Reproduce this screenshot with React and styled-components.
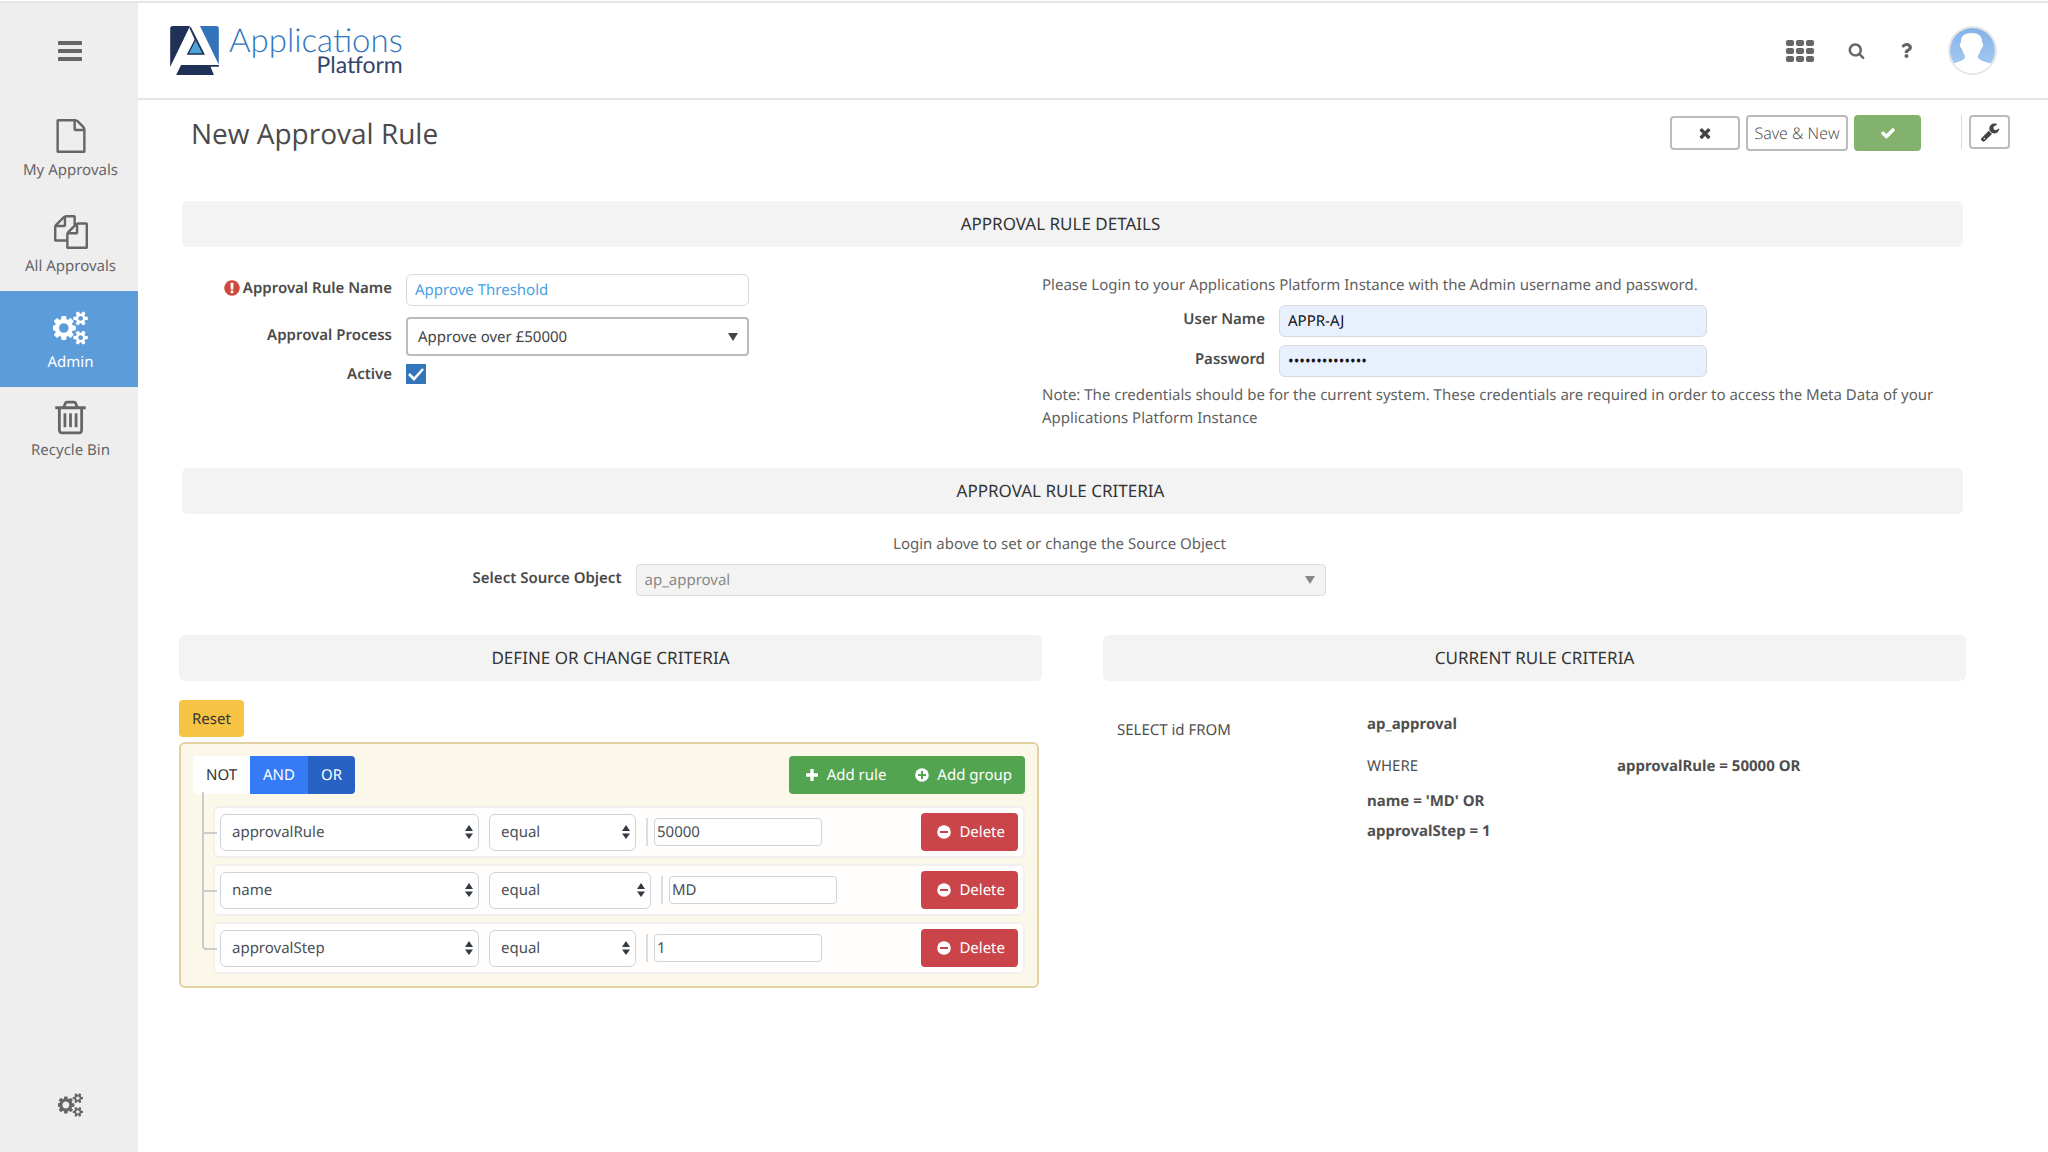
import React, { useState } from 'react';
import styled, { createGlobalStyle, css } from 'styled-components';
import { FaQuestion } from 'react-icons/fa';

const GlobalStyle = createGlobalStyle`
  *, *::before, *::after {
    box-sizing: border-box;
  }

  body {
    margin: 1px 0 0;
    background: #fff;
    color: #555;
    font-family: 'Noto Sans', 'Open Sans', sans-serif;
    font-size: 15px;
    line-height: 24px;
    text-rendering: geometricPrecision;
  }

  button, input, select {
    font: inherit;
    color: inherit;
    margin: 0;
    text-rendering: inherit;
  }

  button {
    cursor: pointer;
  }
`;

const ICONS = {
  bars: 'M1664 1344v128q0 26-19 45t-45 19h-1408q-26 0-45-19t-19-45v-128q0-26 19-45t45-19h1408q26 0 45 19t19 45zm0-512v128q0 26-19 45t-45 19h-1408q-26 0-45-19t-19-45v-128q0-26 19-45t45-19h1408q26 0 45 19t19 45zm0-512v128q0 26-19 45t-45 19h-1408q-26 0-45-19t-19-45v-128q0-26 19-45t45-19h1408q26 0 45 19t19 45z',
  file: 'M1596 380q28 28 48 76t20 88v1152q0 40-28 68t-68 28h-1344q-40 0-68-28t-28-68v-1600q0-40 28-68t68-28h896q40 0 88 20t76 48zm-444-244v376h376q-10-29-22-41l-313-313q-12-12-41-22zm384 1528v-1024h-416q-40 0-68-28t-28-68v-416h-768v1536h1280z',
  files: 'M1696 384q40 0 68 28t28 68v1216q0 40-28 68t-68 28h-960q-40 0-68-28t-28-68v-288h-544q-40 0-68-28t-28-68v-672q0-40 20-88t48-76l408-408q28-28 76-48t88-20h416q40 0 68 28t28 68v328q68-40 128-40h416zm-544 213l-299 299h299v-299zm-640-384l-299 299h299v-299zm196 647l316-316v-416h-384v416q0 40-28 68t-68 28h-416v640h512v-256q0-40 20-88t48-76zm956 804v-1152h-384v416q0 40-28 68t-68 28h-416v640h896z',
  cogs: 'M832 896q0-106-75-181t-181-75-181 75-75 181 75 181 181 75 181-75 75-181zm768 512q0-52-38-90t-90-38-90 38-38 90q0 53 37.5 90.5t90.5 37.5 90.5-37.5 37.5-90.5zm0-1024q0-52-38-90t-90-38-90 38-38 90q0 53 37.5 90.5t90.5 37.5 90.5-37.5 37.5-90.5zm-384 421v185q0 10-7 19.5t-16 10.5l-155 24q-11 35-32 76 34 48 90 115 7 11 7 20 0 12-7 19-23 30-82.5 89.5t-78.5 59.5q-11 0-21-7l-115-90q-37 19-77 31-11 108-23 155-7 24-30 24h-186q-11 0-20-7.5t-10-17.5l-23-153q-34-10-75-31l-118 89q-7 7-20 7-11 0-21-8-144-133-144-160 0-9 7-19 10-14 41-53t47-61q-23-44-35-82l-152-24q-10-1-17-9.5t-7-19.5v-185q0-10 7-19.5t16-10.5l155-24q11-35 32-76-34-48-90-115-7-11-7-20 0-12 7-20 22-30 82-89t79-59q11 0 21 7l115 90q34-18 77-32 11-108 23-154 7-24 30-24h186q11 0 20 7.5t10 17.5l23 153q34 10 75 31l118-89q8-7 20-7 11 0 21 8 144 133 144 160 0 8-7 19-12 16-42 54t-45 60q23 48 34 82l152 23q10 2 17 10.5t7 19.5zm640 533v140q0 16-149 31-12 27-30 52 51 113 51 138 0 4-4 7-122 71-124 71-8 0-46-47t-52-68q-20 2-30 2t-30-2q-14 21-52 68t-46 47q-2 0-124-71-4-3-4-7 0-25 51-138-18-25-30-52-149-15-149-31v-140q0-16 149-31 13-29 30-52-51-113-51-138 0-4 4-7 4-2 35-20t59-34 30-16q8 0 46 46.5t52 67.5q20-2 30-2t30 2q51-71 92-112l6-2q4 0 124 70 4 3 4 7 0 25-51 138 17 23 30 52 149 15 149 31zm0-1024v140q0 16-149 31-12 27-30 52 51 113 51 138 0 4-4 7-122 71-124 71-8 0-46-47t-52-68q-20 2-30 2t-30-2q-14 21-52 68t-46 47q-2 0-124-71-4-3-4-7 0-25 51-138-18-25-30-52-149-15-149-31v-140q0-16 149-31 13-29 30-52-51-113-51-138 0-4 4-7 4-2 35-20t59-34 30-16q8 0 46 46.5t52 67.5q20-2 30-2t30 2q51-71 92-112l6-2q4 0 124 70 4 3 4 7 0 25-51 138 17 23 30 52 149 15 149 31z',
  trash: 'M704 736v576q0 14-9 23t-23 9h-64q-14 0-23-9t-9-23v-576q0-14 9-23t23-9h64q14 0 23 9t9 23zm256 0v576q0 14-9 23t-23 9h-64q-14 0-23-9t-9-23v-576q0-14 9-23t23-9h64q14 0 23 9t9 23zm256 0v576q0 14-9 23t-23 9h-64q-14 0-23-9t-9-23v-576q0-14 9-23t23-9h64q14 0 23 9t9 23zm128 724v-948h-896v948q0 22 7 40.5t14.5 27 10.5 8.5h832q3 0 10.5-8.5t14.5-27 7-40.5zm-672-1076h448l-48-117q-7-9-17-11h-317q-10 2-17 11zm928 32v64q0 14-9 23t-23 9h-96v948q0 83-47 143.5t-113 60.5h-832q-66 0-113-58.5t-47-141.5v-952h-96q-14 0-23-9t-9-23v-64q0-14 9-23t23-9h309l70-167q15-37 54-63t79-26h320q40 0 79 26t54 63l70 167h309q14 0 23 9t9 23z',
  search: 'M1216 832q0-185-131.5-316.5t-316.5-131.5-316.5 131.5-131.5 316.5 131.5 316.5 316.5 131.5 316.5-131.5 131.5-316.5zm512 832q0 52-38 90t-90 38q-54 0-90-38l-343-342q-179 124-399 124-143 0-273.5-55.5t-225-150-150-225-55.5-273.5 55.5-273.5 150-225 225-150 273.5-55.5 273.5 55.5 225 150 150 225 55.5 273.5q0 220-124 399l343 343q37 37 37 90z',
  times: 'M1490 1322q0 40-28 68l-136 136q-28 28-68 28t-68-28l-294-294-294 294q-28 28-68 28t-68-28l-136-136q-28-28-28-68t28-68l294-294-294-294q-28-28-28-68t28-68l136-136q28-28 68-28t68 28l294 294 294-294q28-28 68-28t68 28l136 136q28 28 28 68t-28 68l-294 294 294 294q28 28 28 68z',
  check: 'M1671 566q0 40-28 68l-724 724-136 136q-28 28-68 28t-68-28l-136-136-362-362q-28-28-28-68t28-68l136-136q28-28 68-28t68 28l294 295 656-657q28-28 68-28t68 28l136 136q28 28 28 68z',
  wrench: 'M448 1472q0-26-19-45t-45-19-45 19-19 45 19 45 45 19 45-19 19-45zm644-420l-682 682q-37 37-90 37-52 0-91-37l-106-108q-38-36-38-90 0-53 38-91l681-681q39 98 114.5 173.5t173.5 114.5zm634-435q0 39-23 106-47 134-164.5 217.5t-258.5 83.5q-185 0-316.5-131.5t-131.5-316.5 131.5-316.5 316.5-131.5q58 0 121.5 16.5t107.5 46.5q16 11 16 28t-16 28l-293 169v224l193 107q5-3 79-48.5t135.5-81 70.5-35.5q15 0 23.5 10t8.5 25z',
  alert: 'M896 128q209 0 385.5 103t279.5 279.5 103 385.5-103 385.5-279.5 279.5-385.5 103-385.5-103-279.5-279.5-103-385.5 103-385.5 279.5-279.5 385.5-103zm128 1247v-190q0-14-9-23.5t-22-9.5h-192q-13 0-23 10t-10 23v190q0 13 10 23t23 10h192q13 0 22-9.5t9-23.5zm-2-344l18-621q0-12-10-18-10-8-24-8h-220q-14 0-24 8-10 6-10 18l17 621q0 10 10 17.5t24 7.5h185q14 0 23.5-7.5t10.5-17.5z',
};

const Icon = ({ name, size = 16 }) => (
  <svg
    width={name === 'cogs' ? Math.round(size * 1.07) : size}
    height={size}
    viewBox={name === 'cogs' ? '0 0 1920 1792' : '0 0 1792 1792'}
    fill="currentColor"
    aria-hidden="true"
  >
    <path d={ICONS[name]} />
  </svg>
);

const GridIcon = () => (
  <svg width="28" height="22" viewBox="0 0 28 22" fill="currentColor" aria-hidden="true">
    {[0, 8, 16].map(y => [0, 10, 20].map(x => (
      <rect key={`${x}-${y}`} x={x} y={y} width="8" height="6" rx="2" />
    )))}
  </svg>
);

const PlusIcon = () => (
  <svg width="14" height="14" viewBox="0 0 14 14" fill="none" stroke="currentColor" strokeWidth="3.4" aria-hidden="true">
    <path d="M7 1v12M1 7h12" />
  </svg>
);

const CircleIcon = ({ sign, color }) => (
  <svg width="14" height="14" viewBox="0 0 14 14" aria-hidden="true">
    <circle cx="7" cy="7" r="6.8" fill="#fff" />
    <path d={sign === 'plus' ? 'M7 3v8M3 7h8' : 'M3 7h8'} stroke={color} strokeWidth="2" />
  </svg>
);

const DownArrow = () => (
  <svg width="10" height="8" viewBox="0 0 10 8" fill="currentColor" aria-hidden="true">
    <path d="M0 0h10L5 8z" />
  </svg>
);

const UpDownArrows = () => (
  <svg width="8" height="14" viewBox="0 0 8 14" fill="#343a40" aria-hidden="true">
    <path d="M4 0l4 6H0zM4 14L0 8.400h8z" />
  </svg>
);

const LogoMark = () => (
  <svg width="49" height="49" viewBox="0 0 147 148" aria-hidden="true">
    <path d="M8 0h52L0 124V8q0-8 8-8z" fill="#1f3156" />
    <path d="M90 0h49q8 0 8 8v109z" fill="#3273b9" />
    <path d="M58 6l4-4 43 85H50l24-46z" fill="#1f3156" />
    <path d="M77 44l20 38H57z" fill="#4ba3d8" />
    <path d="M33 118h114v5h-25l10 25H18z" fill="#1f3156" />
  </svg>
);

const Avatar = () => (
  <svg width="49" height="49" viewBox="0 0 49 49" role="img" aria-label="Profile">
    <defs>
      <linearGradient id="avatarFill" x1="0" y1="0" x2="0" y2="1">
        <stop offset="0" stopColor="#82b1e7" />
        <stop offset="1" stopColor="#a3c8f0" />
      </linearGradient>
      <clipPath id="avatarClip">
        <circle cx="24.500" cy="24.500" r="22.500" />
      </clipPath>
    </defs>
    <circle cx="24.500" cy="24.500" r="23.500" fill="#fff" stroke="#e6e6e6" strokeWidth="2" />
    <g clipPath="url(#avatarClip)">
      <rect width="49" height="38" fill="url(#avatarFill)" />
      <path
        d="M23.500 7c7 0 11 3 10.500 9.500 1 .3 1.200 1.500 1 3-.3 1.600-.8 3-2 3.200-.6 3-1.500 5-3 6.800v2c1 2.500 6 4.500 15 6.500v12H3V38c8-2 13-4 14-6.500v-2c-1.500-1.800-2.500-3.800-3-6.800-1.300-.2-1.900-1.600-2-3.200-.1-1.500 0-2.700 1-3C12.500 10 16.500 7 23.500 7z"
        fill="#fff"
      />
    </g>
  </svg>
);

const Page = styled.div`
  display: flex;
  min-height: calc(100vh - 1px);
  border-top: 2px solid #e3e6e8;
`;

const Sidebar = styled.aside`
  display: flex;
  flex-direction: column;
  flex: none;
  width: 138px;
  background: #eee;
  color: #666;
`;

const IconButton = styled.button`
  display: flex;
  align-items: center;
  justify-content: center;
  padding: 0;
  border: 0;
  background: none;
  color: #666;
`;

const MenuButton = styled(IconButton)`
  height: 96px;
  padding-left: 1px;
`;

const SettingsButton = styled(IconButton)`
  height: 24px;
  margin: auto 0 35px;
  padding-left: 3px;
`;

const NavItem = styled.a`
  display: flex;
  flex-direction: column;
  align-items: center;
  height: 96px;
  padding-top: ${({ $compact }) => ($compact ? '11px' : '20px')};
  padding-left: 3px;
  gap: ${({ $compact }) => ($compact ? '1px' : '5px')};
  color: inherit;
  text-decoration: none;

  ${({ $active }) => $active && css`
    background: #5d9cdb;
    color: #fff;
  `}
`;

const Main = styled.div`
  flex: 1;
  min-width: 0;
`;

const Header = styled.header`
  display: flex;
  align-items: center;
  justify-content: space-between;
  height: 97px;
  padding: 0 50px 0 32px;
  border-bottom: 2px solid #e3e6e8;
`;

const Logo = styled.a`
  display: flex;
  align-items: center;
  gap: 10px;
  text-decoration: none;
`;

const LogoText = styled.span`
  display: flex;
  flex-direction: column;
  align-items: flex-end;
  font-family: Lato, 'Open Sans', sans-serif;
`;

const LogoName = styled.span`
  color: #3276bd;
  font-size: 33px;
  font-weight: 300;
  line-height: 26px;
`;

const LogoSub = styled.span`
  color: #33456b;
  font-size: 23px;
  line-height: 22px;
`;

const HeaderTools = styled.div`
  display: flex;
  align-items: center;
  gap: 34px;
`;

const AvatarButton = styled(IconButton)`
  margin-right: 1px;
`;

const TitleBar = styled.div`
  display: flex;
  align-items: flex-start;
  justify-content: space-between;
  padding: 15px 38px 0 53px;
`;

const Title = styled.h1`
  margin: 0;
  color: #4a4a4a;
  font-family: 'Open Sans', 'Noto Sans', sans-serif;
  font-size: 28px;
  font-weight: 400;
  line-height: 38px;
`;

const Actions = styled.div`
  display: flex;
  align-items: center;
  gap: 6px;
`;

const ActionButton = styled.button`
  display: flex;
  align-items: center;
  justify-content: center;
  width: ${({ $width }) => $width}px;
  height: ${({ $small }) => ($small ? '34px' : '36px')};
  padding: 0;
  border: 2px solid #bbb;
  border-radius: 4px;
  background: #fff;
  color: #444;
  font-family: 'Open Sans', 'Noto Sans', sans-serif;
  font-size: 16px;
  font-weight: 300;
  white-space: nowrap;

  ${({ $primary }) => $primary && css`
    border-color: #83b26f;
    background: #83b26f;
    color: #fff;
  `}
`;

const ToolsGroup = styled.div`
  align-self: flex-start;
  margin-left: 34px;
  padding-left: 7px;
  border-left: 1px solid #ddd;
`;

const Content = styled.main`
  padding: 48px 82px 40px 41px;
`;

const SectionTitle = styled.h2`
  margin: 0 ${({ $inset }) => ($inset ? '3px' : '0')};
  padding: 11px ${({ $inset }) => ($inset ? '24px' : '0')} 11px 0;
  border-radius: 6px;
  background: #f3f3f3;
  color: #333;
  font-size: 17px;
  font-weight: 400;
  line-height: 24px;
  text-align: center;
`;

const Details = styled.div`
  display: grid;
  grid-template-columns: 570px 1fr;
  column-gap: 293px;
  min-height: 221px;
  padding-top: 27px;
`;

const Fields = styled.div`
  display: flex;
  flex-direction: column;
  gap: 8px;
`;

const LoginFields = styled(Fields)`
  padding: 8px 0 7px;
`;

const Field = styled.div`
  display: flex;
  gap: 14px;
`;

const NameField = styled(Field)`
  padding-bottom: 3px;
`;

const Label = styled.label`
  display: flex;
  align-items: center;
  justify-content: flex-end;
  flex: none;
  gap: 2px;
  width: ${({ $width }) => $width}px;
  height: ${({ $height = 28 }) => $height}px;
  color: #4a4a4a;
  font-weight: 600;
  white-space: nowrap;
`;

const Required = styled.span`
  display: flex;
  color: #d0493f;
`;

const TextInput = styled.input`
  width: ${({ $width }) => $width}px;
  height: 32px;
  padding: 0 8px;
  border: 1px solid #d8d8d8;
  border-radius: 6px;
  background: ${({ $filled }) => ($filled ? '#e8f0fe' : '#fff')};
  color: ${({ $filled }) => ($filled ? '#111' : '#4a9fe6')};
`;

const SelectBox = styled.span`
  position: relative;
  display: block;
  width: ${({ $width }) => $width}px;
  color: ${({ $muted }) => ($muted ? '#888' : '#444')};

  svg {
    position: absolute;
    top: 50%;
    right: 11px;
    transform: translateY(-50%);
    pointer-events: none;
  }
`;

const Select = styled.select`
  display: block;
  appearance: none;
  width: 100%;
  height: 39px;
  padding: 0 10px;
  border: 2px solid #bbb;
  border-radius: 4px;
  background: #fff;

  &:disabled {
    height: 32px;
    padding: 0 8px;
    border: 1px solid #ddd;
    background: #f3f3f3;
    opacity: 1;
  }
`;

const Checkbox = styled.input`
  appearance: none;
  width: 20px;
  height: 20px;
  background: #3276b9 url("data:image/svg+xml,%3Csvg xmlns='http://www.w3.org/2000/svg' viewBox='0 0 20 20' fill='none' stroke='white' stroke-width='2.6'%3E%3Cpath d='M3 10l5 5 9-10'/%3E%3C/svg%3E") center / 20px;

  &:not(:checked) {
    border: 2px solid #3276b9;
    background: #fff;
  }
`;

const Note = styled.p`
  margin: 0;
  color: #5f5f5f;
  line-height: 23px;
`;

const Login = styled.div`
  max-width: 922px;
`;

const SourceObject = styled.div`
  display: flex;
  flex-direction: column;
  align-items: center;
  gap: 8px;
  padding: 19px 26px 39px 0;
  text-align: center;
`;

const SourceField = styled(Field)`
  margin-right: 326px;
`;

const Columns = styled.div`
  display: grid;
  grid-template-columns: 1fr 1fr;
  column-gap: 61px;
`;

const ResetButton = styled.button`
  height: 37px;
  margin: 19px 0 5px;
  padding: 0 13px;
  border: 0;
  border-radius: 4px;
  background: #f6c344;
  color: #333;
`;

const Builder = styled.div`
  margin-right: 3px;
  padding: 12px;
  border: 2px solid #e3d1a2;
  border-radius: 6px;
  background: #fcf8e9;
`;

const BuilderHeader = styled.div`
  display: flex;
  justify-content: space-between;
`;

const ButtonGroup = styled.div`
  display: flex;
  border-radius: 4px;
  overflow: hidden;
`;

const GroupButton = styled.button`
  height: 38px;
  padding: 0 13px;
  border: 0;
  background: ${({ $color }) => $color};
  color: ${({ $dark }) => ($dark ? '#333' : '#fff')};
`;

const BuilderButton = styled.button`
  display: flex;
  align-items: center;
  gap: 8px;
  height: 38px;
  padding: 0 13px 0 16px;
  border: 0;
  border-radius: ${({ $rounded }) => ($rounded ? '4px' : '0')};
  background: ${({ $color }) => $color};
  color: #fff;
`;

const RuleList = styled.ul`
  display: flex;
  flex-direction: column;
  gap: 6px;
  margin: 12px 0 0;
  padding: 0 0 0 20px;
  list-style: none;
`;

const Rule = styled.li`
  position: relative;
  display: flex;
  align-items: center;
  height: 52px;
  padding: 0 5px;
  border: 2px solid #f1f0ee;
  border-radius: 6px;
  background: #fffefc;

  /* tree connector drawn in the gutter on the left */
  &::before {
    content: '';
    position: absolute;
    left: -13px;
    top: -34px;
    width: 15px;
    height: 60px;
    border: solid #ccc;
    border-width: 0 0 2px 2px;
  }

  &:first-child::before {
    top: -16px;
    height: 42px;
  }

  &:last-child::before {
    border-bottom-left-radius: 4px;
  }
`;

const RuleSelectBox = styled(SelectBox)`
  margin-right: 10px;
  color: #495057;

  svg {
    right: 6px;
  }
`;

const RuleSelect = styled(Select)`
  height: 37px;
  border: 1px solid #ced4da;
  border-radius: 6px;
  padding: 0 11px;
`;

const ValueWrap = styled.div`
  height: 28px;
  padding-left: 6px;
  border-left: 2px solid #ddd;
`;

const ValueInput = styled.input`
  display: block;
  width: 168px;
  height: 28px;
  padding: 0 2px;
  border: 1px solid #ced4da;
  border-radius: 4px;
  background: #fff;
  color: #495057;
`;

const DeleteSlot = styled.div`
  margin-left: auto;
`;

const Criteria = styled.dl`
  display: grid;
  grid-template-columns: 250px 250px 1fr;
  margin: 0;
  padding: 31px 0 0 14px;
  color: #4f4f4f;
`;

const Term = styled.dt`
  padding-top: ${({ $lowered }) => ($lowered ? '6px' : '0')};
  grid-column: ${({ $column }) => $column};
`;

const Clause = styled.dd`
  grid-column: ${({ $column }) => $column};
  height: ${({ $height }) => $height}px;
  margin: 0;
  font-weight: 700;
`;

const NAV_ITEMS = [
  { label: 'My Approvals', icon: 'file', size: 34 },
  { label: 'All Approvals', icon: 'files', size: 34 },
  { label: 'Admin', icon: 'cogs', size: 34, active: true },
  { label: 'Recycle Bin', icon: 'trash', size: 39, compact: true },
];

const INITIAL_RULES = [
  { id: 1, field: 'approvalRule', operator: 'equal', value: '50000' },
  { id: 2, field: 'name', operator: 'equal', value: 'MD', wide: true },
  { id: 3, field: 'approvalStep', operator: 'equal', value: '1' },
];

const RuleRow = ({ rule, onDelete }) => (
  <Rule>
    <RuleSelectBox $width={259}>
      <RuleSelect aria-label="Field" defaultValue={rule.field}>
        <option>approvalRule</option>
        <option>name</option>
        <option>approvalStep</option>
      </RuleSelect>
      <UpDownArrows />
    </RuleSelectBox>
    <RuleSelectBox $width={rule.wide ? 162 : 147}>
      <RuleSelect aria-label="Operator" defaultValue={rule.operator}>
        <option>equal</option>
        <option>not equal</option>
      </RuleSelect>
      <UpDownArrows />
    </RuleSelectBox>
    <ValueWrap>
      <ValueInput aria-label="Value" defaultValue={rule.value} />
    </ValueWrap>
    <DeleteSlot>
      <BuilderButton type="button" $rounded $color="#c94549" onClick={() => onDelete(rule.id)}>
        <CircleIcon sign="minus" color="#c94549" />
        Delete
      </BuilderButton>
    </DeleteSlot>
  </Rule>
);

const App = () => {
  const [rules, setRules] = useState(INITIAL_RULES);

  const addRule = () => {
    setRules([...rules, { id: Date.now(), field: 'name', operator: 'equal', value: '' }]);
  };

  const deleteRule = (id) => {
    setRules(rules.filter(rule => rule.id !== id));
  };

  return (
    <>
      <GlobalStyle />
      <Page>
        <Sidebar>
          <MenuButton type="button" aria-label="Menu">
            <Icon name="bars" size={28} />
          </MenuButton>
          <nav>
            {NAV_ITEMS.map(item => (
              <NavItem key={item.label} href="#" $active={item.active} $compact={item.compact}>
                <Icon name={item.icon} size={item.size} />
                {item.label}
              </NavItem>
            ))}
          </nav>
          <SettingsButton type="button" aria-label="Settings">
            <Icon name="cogs" size={24} />
          </SettingsButton>
        </Sidebar>

        <Main>
          <Header>
            <Logo href="#">
              <LogoMark />
              <LogoText>
                <LogoName>Applications</LogoName>
                <LogoSub>Platform</LogoSub>
              </LogoText>
            </Logo>
            <HeaderTools>
              <IconButton type="button" aria-label="Apps"><GridIcon /></IconButton>
              <IconButton type="button" aria-label="Search"><Icon name="search" size={17} /></IconButton>
              <IconButton type="button" aria-label="Help"><FaQuestion size={15} /></IconButton>
              <AvatarButton type="button"><Avatar /></AvatarButton>
            </HeaderTools>
          </Header>

          <TitleBar>
            <Title>New Approval Rule</Title>
            <Actions>
              <ActionButton type="button" aria-label="Cancel" $width={70} $small>
                <Icon name="times" size={16} />
              </ActionButton>
              <ActionButton type="button" $width={102}>Save &amp; New</ActionButton>
              <ActionButton type="button" aria-label="Save" $width={67} $primary>
                <Icon name="check" size={16} />
              </ActionButton>
              <ToolsGroup>
                <ActionButton type="button" aria-label="Tools" $width={41} $small>
                  <Icon name="wrench" size={20} />
                </ActionButton>
              </ToolsGroup>
            </Actions>
          </TitleBar>

          <Content>
            <SectionTitle $inset>APPROVAL RULE DETAILS</SectionTitle>
            <Details>
              <Fields>
                <NameField>
                  <Label htmlFor="ruleName" $width={213}>
                    <Required><Icon name="alert" size={18} /></Required>
                    Approval Rule Name
                  </Label>
                  <TextInput id="ruleName" $width={343} defaultValue="Approve Threshold" />
                </NameField>
                <Field>
                  <Label htmlFor="process" $width={213} $height={36}>Approval Process</Label>
                  <SelectBox $width={343}>
                    <Select id="process">
                      <option>Approve over £50000</option>
                    </Select>
                    <DownArrow />
                  </SelectBox>
                </Field>
                <Field>
                  <Label htmlFor="active" $width={213} $height={20}>Active</Label>
                  <Checkbox id="active" type="checkbox" defaultChecked />
                </Field>
              </Fields>

              <Login>
                <Note>
                  Please Login to your Applications Platform Instance with the Admin username and password.
                </Note>
                <LoginFields>
                  <Field>
                    <Label htmlFor="userName" $width={223}>User Name</Label>
                    <TextInput id="userName" $width={428} $filled defaultValue="APPR-AJ" />
                  </Field>
                  <Field>
                    <Label htmlFor="password" $width={223}>Password</Label>
                    <TextInput id="password" type="password" $width={428} $filled defaultValue="approvalsadmin" />
                  </Field>
                </LoginFields>
                <Note>
                  Note: The credentials should be for the current system. These credentials are required in
                  order to access the Meta Data of your Applications Platform Instance
                </Note>
              </Login>
            </Details>

            <SectionTitle $inset>APPROVAL RULE CRITERIA</SectionTitle>
            <SourceObject>
              <Note>Login above to set or change the Source Object</Note>
              <SourceField>
                <Label htmlFor="source" $width={154}>Select Source Object</Label>
                <SelectBox $width={690} $muted>
                  <Select id="source" disabled>
                    <option>ap_approval</option>
                  </Select>
                  <DownArrow />
                </SelectBox>
              </SourceField>
            </SourceObject>

            <Columns>
              <section>
                <SectionTitle>DEFINE OR CHANGE CRITERIA</SectionTitle>
                <ResetButton type="button" onClick={() => setRules(INITIAL_RULES)}>Reset</ResetButton>
                <Builder>
                  <BuilderHeader>
                    <ButtonGroup>
                      <GroupButton type="button" $color="#fff" $dark>NOT</GroupButton>
                      <GroupButton type="button" $color="#357af6">AND</GroupButton>
                      <GroupButton type="button" $color="#2862c4">OR</GroupButton>
                    </ButtonGroup>
                    <ButtonGroup>
                      <BuilderButton type="button" $color="#53a451" onClick={addRule}>
                        <PlusIcon />
                        Add rule
                      </BuilderButton>
                      <BuilderButton type="button" $color="#53a451">
                        <CircleIcon sign="plus" color="#53a451" />
                        Add group
                      </BuilderButton>
                    </ButtonGroup>
                  </BuilderHeader>
                  <RuleList>
                    {rules.map(rule => (
                      <RuleRow key={rule.id} rule={rule} onDelete={deleteRule} />
                    ))}
                  </RuleList>
                </Builder>
              </section>

              <section>
                <SectionTitle>CURRENT RULE CRITERIA</SectionTitle>
                <Criteria>
                  <Term $column={1} $lowered>SELECT id FROM</Term>
                  <Clause $column={2} $height={42}>ap_approval</Clause>
                  <Term $column={2}>WHERE</Term>
                  <Clause $column={3} $height={35}>approvalRule = 50000 OR</Clause>
                  <Clause $column={2} $height={30}>name = 'MD' OR</Clause>
                  <Clause $column={2} $height={30}>approvalStep = 1</Clause>
                </Criteria>
              </section>
            </Columns>
          </Content>
        </Main>
      </Page>
    </>
  );
};

export default App;
